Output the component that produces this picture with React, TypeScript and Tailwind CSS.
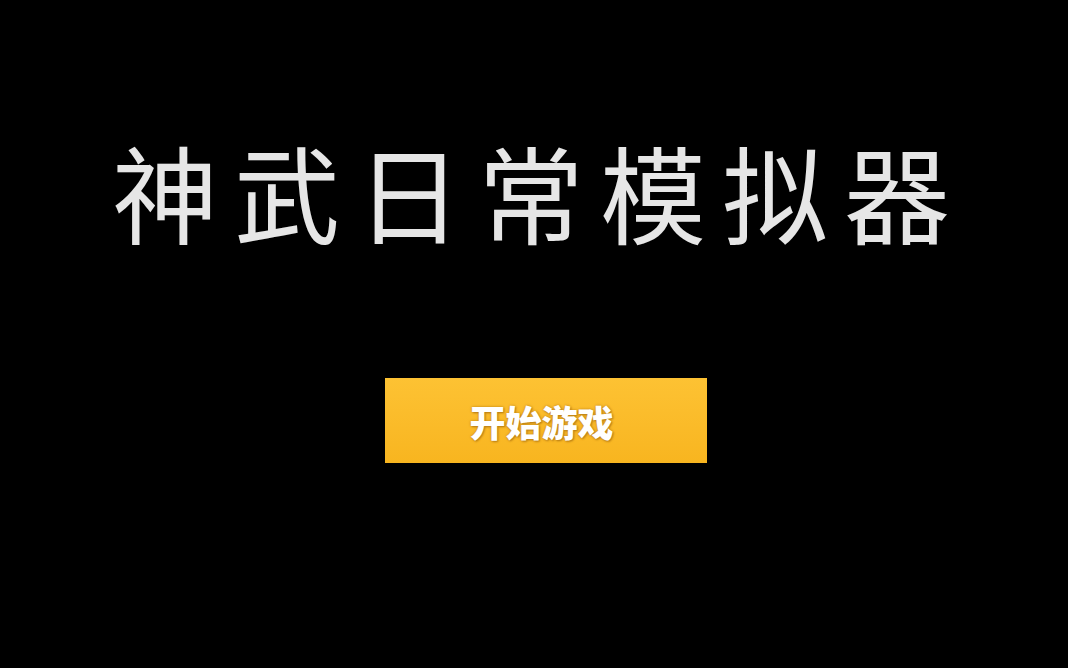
export default function App() {
  return (
    <div className="flex h-[668px] w-full flex-col items-center bg-black font-['Noto_Sans_CJK_SC','Noto_Sans_CJK_JP',sans-serif]">
      <h1 className="mt-[126px] whitespace-nowrap pl-[10px] text-[106px] font-normal leading-[128px] tracking-[16px] text-[#e6e6e6]">
        神武日常模拟器
      </h1>
      <button
        type="button"
        className="mt-[124px] ml-[23px] flex h-[85px] w-[322px] items-center justify-center bg-gradient-to-b from-[#fdc233] to-[#f8b51f] pr-[8px] text-[36px] font-black text-white [text-shadow:0_0_3px_#c2861a,1px_1px_2px_#b57a12]"
      >
        开始游戏
      </button>
    </div>
  );
}
